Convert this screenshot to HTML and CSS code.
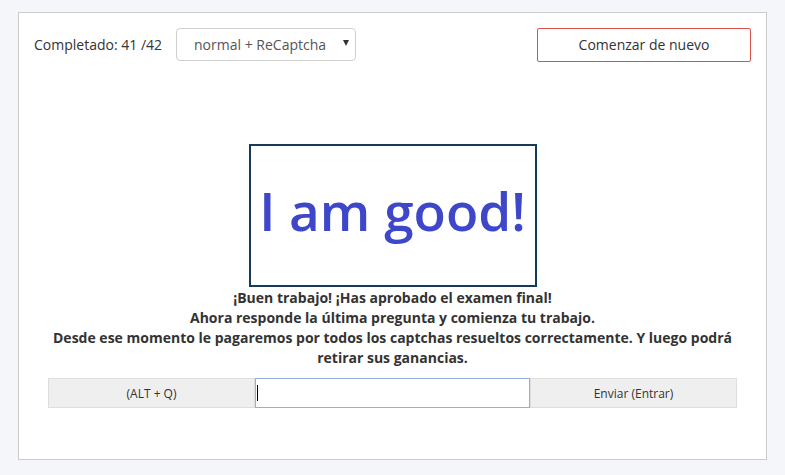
FILE: index.html
```html
<!DOCTYPE html>
<html lang="es">
<head>
<meta charset="utf-8">
<title>Examen</title>
<link rel="stylesheet" href="styles.css">
</head>
<body>
<div class="card">
  <div class="toolbar">
    <div class="left">
      <span class="progress">Completado: 41 /42</span>
      <div class="select"><span>normal + ReCaptcha</span><span class="caret"></span></div>
    </div>
    <button class="restart">Comenzar de nuevo</button>
  </div>
  <div class="captcha"><span>I am good!</span></div>
  <div class="message">
    <p>¡Buen trabajo! ¡Has aprobado el examen final!</p>
    <p>Ahora responde la última pregunta y comienza tu trabajo.</p>
    <p>Desde ese momento le pagaremos por todos los captchas resueltos correctamente. Y luego podrá retirar sus ganancias.</p>
  </div>
  <div class="answer">
    <div class="cell">(ALT + Q)</div>
    <div class="input"><span class="cursor"></span></div>
    <div class="cell">Enviar (Entrar)</div>
  </div>
</div>
</body>
</html>
```
FILE: styles.css
```css
html, body {
  margin: 0;
  padding: 0;
  background: #f5f6f9;
  font-family: "Open Sans", "Noto Sans", sans-serif;
  color: #333;
}
.card {
  box-sizing: border-box;
  margin: 12px 18px 0;
  height: 448px;
  background: #fff;
  border: 1px solid #cccccc;
  padding: 15px 15px 0;
}
.toolbar {
  display: flex;
  justify-content: space-between;
  align-items: center;
  height: 33px;
}
.left {
  display: flex;
  align-items: center;
  gap: 14px;
}
.progress {
  font-size: 14px;
  color: #333;
}
.select {
  box-sizing: border-box;
  width: 180px;
  height: 33px;
  border: 1px solid #cfcfcf;
  border-radius: 4px;
  display: flex;
  align-items: center;
  justify-content: space-between;
  padding: 0 6px 0 17px;
  font-size: 14px;
  color: #555;
}
.caret {
  width: 0;
  height: 0;
  border-left: 3.5px solid transparent;
  border-right: 3.5px solid transparent;
  border-top: 6px solid #333;
  margin-bottom: 3px;
}
.restart {
  box-sizing: border-box;
  width: 214px;
  height: 34px;
  background: #fff;
  border: 1px solid #d9534f;
  border-radius: 2px;
  font-family: inherit;
  font-size: 14px;
  color: #333;
  padding: 0;
}
.captcha {
  box-sizing: border-box;
  width: 288px;
  height: 143px;
  margin: 83px auto 0;
  border: 2px solid #153a5a;
  display: flex;
  align-items: center;
  justify-content: center;
}
.captcha span {
  font-size: 53px;
  font-weight: 600;
  color: #3e47c9;
  line-height: 1;
  margin-top: -10px;
}
.message {
  margin-top: 1px;
  text-align: center;
  font-weight: 700;
  font-size: 14px;
  line-height: 20px;
  color: #333;
  padding: 0 14px;
}
.message p {
  margin: 0;
}
.answer {
  display: grid;
  grid-template-columns: 207px 275px 207px;
  margin: 10px 14px 0;
  height: 30px;
}
.cell {
  box-sizing: border-box;
  background: #efefef;
  border: 1px solid #dedede;
  display: flex;
  align-items: center;
  justify-content: center;
  font-size: 12px;
  color: #333;
}
.input {
  box-sizing: border-box;
  border: 1px solid #93b1e0;
  background: #fff;
  display: flex;
  align-items: center;
  padding-left: 1px;
}
.cursor {
  width: 1px;
  height: 16px;
  background: #000;
}
```
